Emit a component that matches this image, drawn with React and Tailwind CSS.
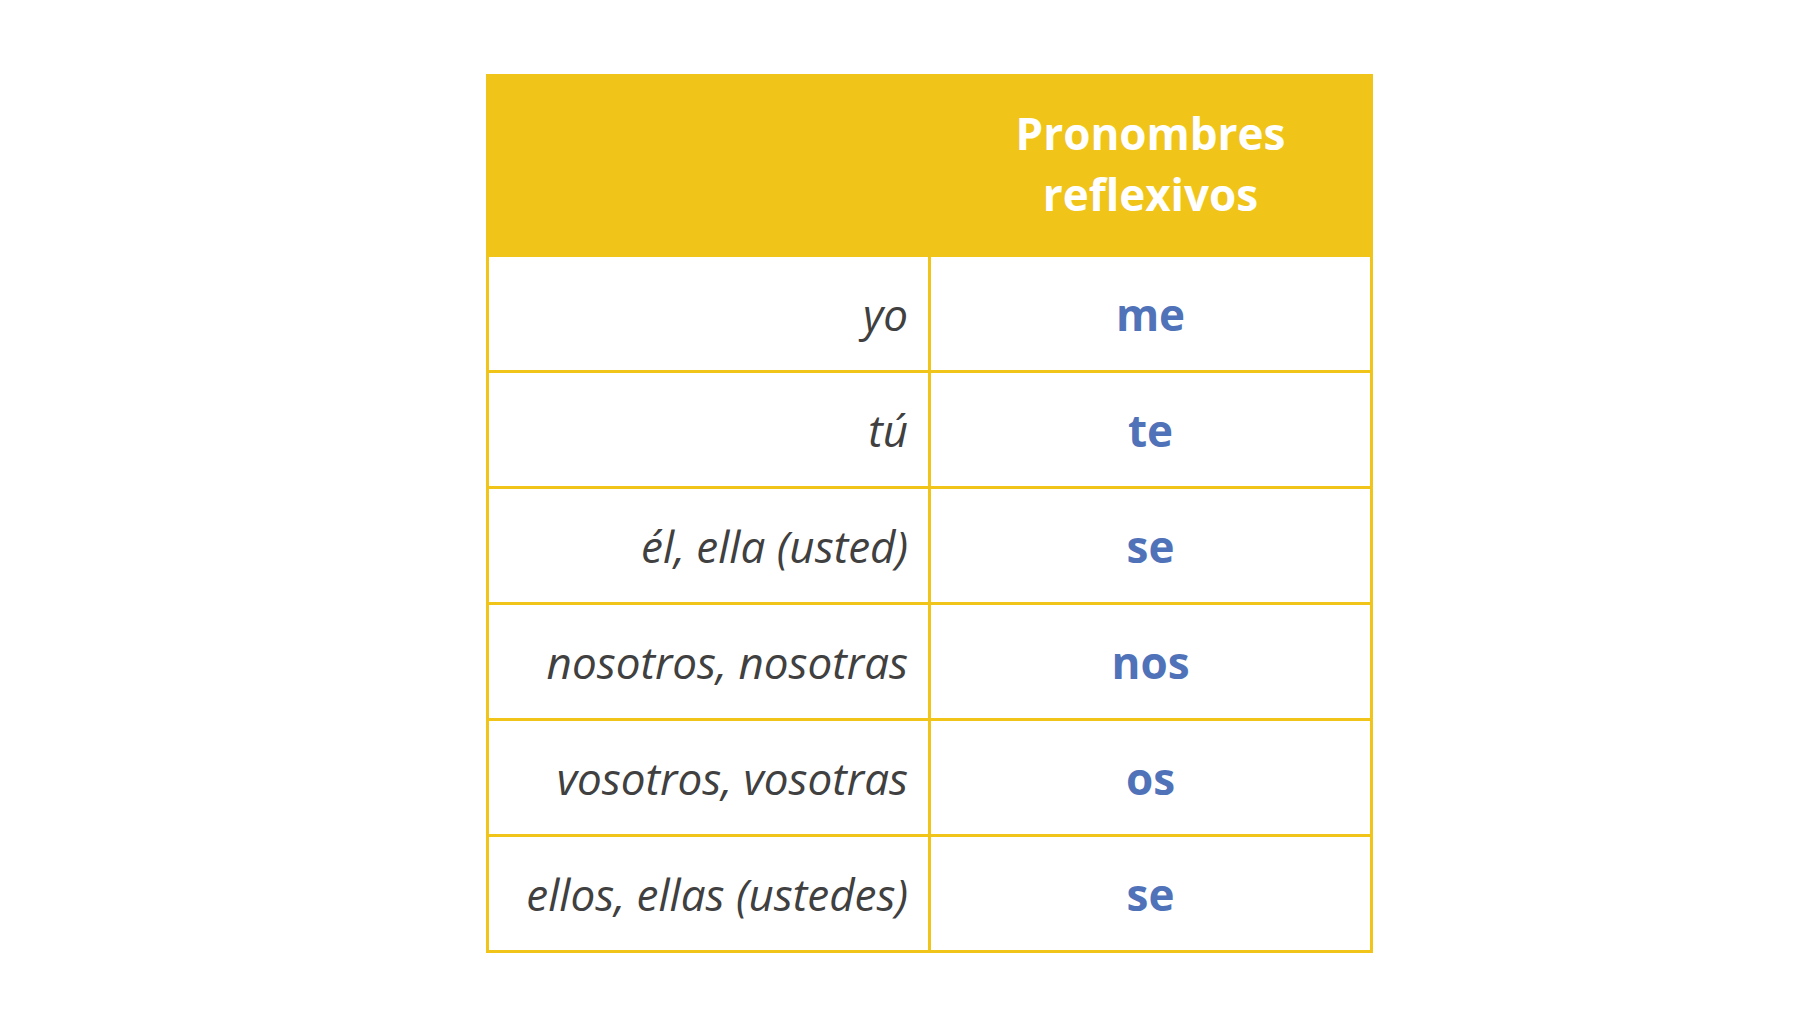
const rows = [
  ['yo', 'me'],
  ['tú', 'te'],
  ['él, ella (usted)', 'se'],
  ['nosotros, nosotras', 'nos'],
  ['vosotros, vosotras', 'os'],
  ['ellos, ellas (ustedes)', 'se'],
]

export default function App() {
  return (
    <div className="min-h-screen bg-white pl-[486px] pt-[74px] font-['Open_Sans',sans-serif]">
      <div className="grid h-fit w-[887px] grid-cols-2 gap-[3px] bg-[#f0c419] p-[3px]">
        <div className="h-[177px]" />
        <div className="flex h-[177px] items-center justify-center pb-[4px] text-center text-[44px] font-bold leading-[61px] text-white">
          <span>
            Pronombres
            <br />
            reflexivos
          </span>
        </div>
        {rows.map(([subject, pronoun], index) => (
          <div className="contents" key={index}>
            <div className="flex h-[113px] items-center justify-end bg-white pr-[20px] text-[44px] italic text-[#404040]">
              {subject}
            </div>
            <div className="flex h-[113px] items-center justify-center bg-white text-[44px] font-bold text-[#5072b8]">
              {pronoun}
            </div>
          </div>
        ))}
      </div>
    </div>
  )
}
